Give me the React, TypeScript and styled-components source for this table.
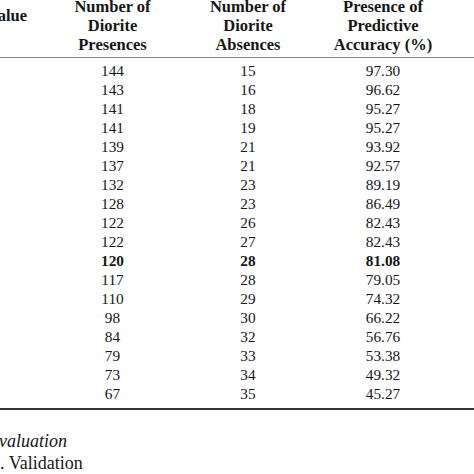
import React from 'react';
import styled, { createGlobalStyle } from 'styled-components';

const GlobalStyle = createGlobalStyle`
  html, body {
    margin: 0;
    padding: 0;
    background: #ffffff;
    overflow: hidden;
  }
`;

const Page = styled.div`
  width: 474px;
  height: 474px;
  overflow: hidden;
  font-family: 'Liberation Serif', 'Times New Roman', serif;
  color: #161616;
  background: #ffffff;
`;

const Table = styled.div`
  display: grid;
  grid-template-columns: 45px 135px 136px 134px 1fr;
`;

const HeadRow = styled.div`
  display: contents;
`;

const HeadCell = styled.div<{ $align?: 'right' | 'center' }>`
  margin-top: -3px;
  padding-bottom: 3px;
  font-weight: bold;
  font-size: 16.5px;
  line-height: 19px;
  text-align: ${p => p.$align ?? 'center'};
  border-bottom: 1px solid #8a8a8a;
  white-space: nowrap;
`;

const ValueHead = styled(HeadCell)`
  padding-top: 9px;
  padding-right: 18px;
  direction: rtl;
`;

const Body = styled.div`
  grid-column: 1 / -1;
  display: grid;
  grid-template-columns: 45px 135px 136px 134px 1fr;
  padding: 2.5px 0 5px;
  border-bottom: 2px solid #333333;
`;

const Cell = styled.div<{ $bold?: boolean }>`
  font-size: 15.3px;
  line-height: 19px;
  height: 19px;
  text-align: center;
  font-weight: ${p => (p.$bold ? 'bold' : 'normal')};
`;

const Notes = styled.div`
  margin-top: 20px;
  font-size: 18px;
  line-height: 22px;
`;

const Note = styled.div<{ $italic?: boolean; $shift: number }>`
  margin-left: ${p => p.$shift}px;
  font-style: ${p => (p.$italic ? 'italic' : 'normal')};
  white-space: nowrap;
`;

type Row = { pres: number; abs: number; acc: string; bold?: boolean };

const rows: Row[] = [
  { pres: 144, abs: 15, acc: '97.30' },
  { pres: 143, abs: 16, acc: '96.62' },
  { pres: 141, abs: 18, acc: '95.27' },
  { pres: 141, abs: 19, acc: '95.27' },
  { pres: 139, abs: 21, acc: '93.92' },
  { pres: 137, abs: 21, acc: '92.57' },
  { pres: 132, abs: 23, acc: '89.19' },
  { pres: 128, abs: 23, acc: '86.49' },
  { pres: 122, abs: 26, acc: '82.43' },
  { pres: 122, abs: 27, acc: '82.43' },
  { pres: 120, abs: 28, acc: '81.08', bold: true },
  { pres: 117, abs: 28, acc: '79.05' },
  { pres: 110, abs: 29, acc: '74.32' },
  { pres: 98, abs: 30, acc: '66.22' },
  { pres: 84, abs: 32, acc: '56.76' },
  { pres: 79, abs: 33, acc: '53.38' },
  { pres: 73, abs: 34, acc: '49.32' },
  { pres: 67, abs: 35, acc: '45.27' },
];

export default function App() {
  return (
    <Page>
      <GlobalStyle />
      <Table>
        <HeadRow>
          <ValueHead $align="right">Value</ValueHead>
          <HeadCell>Number of<br />Diorite<br />Presences</HeadCell>
          <HeadCell>Number of<br />Diorite<br />Absences</HeadCell>
          <HeadCell>Presence of<br />Predictive<br />Accuracy (%)</HeadCell>
          <HeadCell />
        </HeadRow>
        <Body>
          {rows.map((r, i) => (
            <React.Fragment key={i}>
              <Cell />
              <Cell $bold={r.bold}>{r.pres}</Cell>
              <Cell $bold={r.bold}>{r.abs}</Cell>
              <Cell $bold={r.bold}>{r.acc}</Cell>
              <Cell />
            </React.Fragment>
          ))}
        </Body>
      </Table>
      <Notes>
        <Note $italic $shift={-12}>Evaluation</Note>
        <Note $shift={-9}>2. Validation</Note>
      </Notes>
    </Page>
  );
}
